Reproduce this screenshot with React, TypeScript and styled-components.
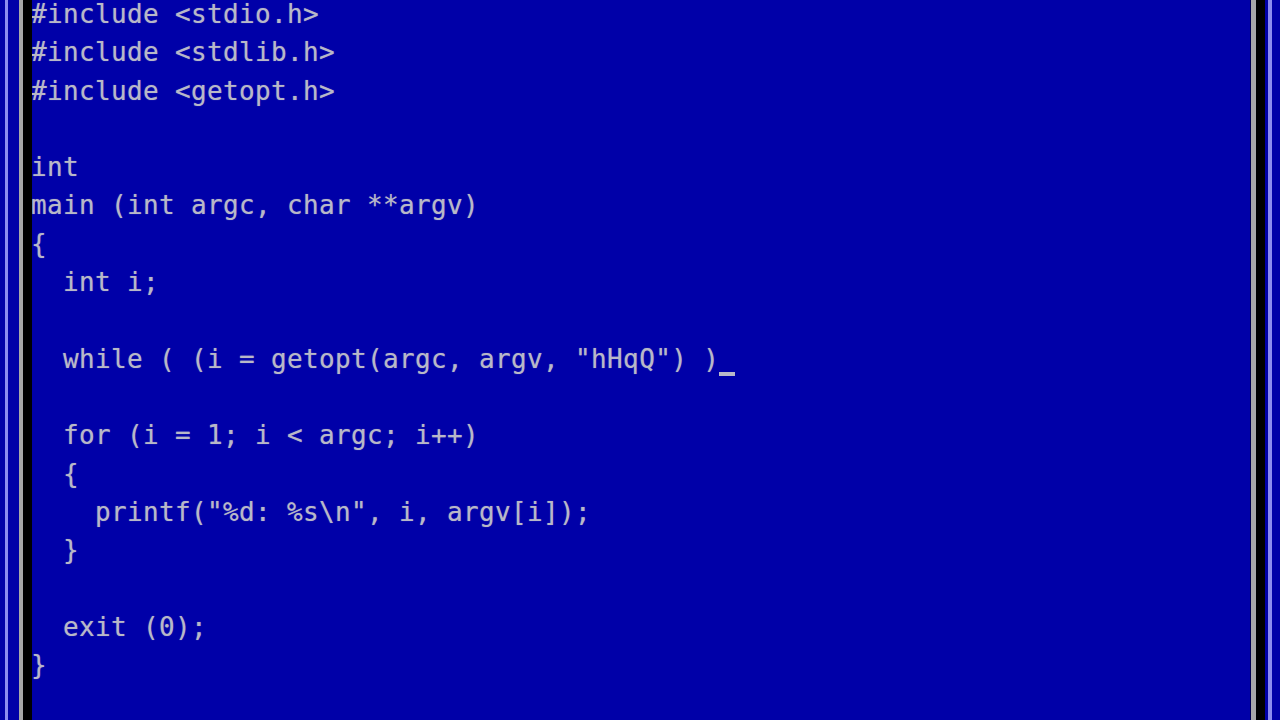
import React from "react";
import styled, { createGlobalStyle } from "styled-components";

const Global = createGlobalStyle`
  html, body { margin: 0; padding: 0; background: #0000a8; overflow: hidden; }
  #root { width: 1280px; height: 720px; }
`;

const Screen = styled.div`
  display: flex;
  width: 1280px;
  height: 720px;
  background: #0000a8;
  overflow: hidden;
`;

const Frame = styled.div`
  display: flex;
  flex: none;
  height: 100%;
`;

const Stripe = styled.div<{ $w: number; $c: string }>`
  flex: none;
  width: ${(p) => p.$w}px;
  height: 100%;
  background: ${(p) => p.$c};
`;

const Editor = styled.div`
  flex: 1;
  min-width: 0;
  overflow: hidden;
  padding-left: 0;
`;

const Code = styled.div`
  margin-top: -5px;
  margin-left: -1px;
  font-family: "DejaVu Sans Mono", "Liberation Mono", monospace;
  font-size: 26px;
  letter-spacing: 0.35px;
  line-height: 38.3px;
  color: #b8b8c8;
  white-space: pre;
  text-shadow: 0 0 1px rgba(184, 184, 200, 0.6);
`;

const Line = styled.div`
  height: 38.3px;
`;

const Cursor = styled.span`
  display: inline-block;
  width: 16px;
  height: 4px;
  background: #b8b8c8;
  vertical-align: -8px;
`;

const BLUE = "#0000a8";
const LAV = "#8c8cf0";
const GRAY = "#a8a8a8";
const BLACK = "#000000";

const lines: string[] = [
  "#include <stdio.h>",
  "#include <stdlib.h>",
  "#include <getopt.h>",
  "",
  "int",
  "main (int argc, char **argv)",
  "{",
  "  int i;",
  "",
  "  while ( (i = getopt(argc, argv, \"hHqQ\") )",
  "",
  "  for (i = 1; i < argc; i++)",
  "  {",
  "    printf(\"%d: %s\\n\", i, argv[i]);",
  "  }",
  "",
  "  exit (0);",
  "}",
  "",
];

export default function App() {
  return (
    <>
      <Global />
      <Screen>
        <Frame>
          <Stripe $w={5} $c={BLUE} />
          <Stripe $w={3} $c={LAV} />
          <Stripe $w={11} $c={BLUE} />
          <Stripe $w={4} $c={GRAY} />
          <Stripe $w={9} $c={BLACK} />
        </Frame>
        <Editor>
          <Code>
            {lines.map((l, i) => (
              <Line key={i}>
                {l}
                {i === 9 && <Cursor />}
              </Line>
            ))}
          </Code>
        </Editor>
        <Frame>
          <Stripe $w={1} $c="#000050" />
          <Stripe $w={5} $c={GRAY} />
          <Stripe $w={9} $c={BLACK} />
          <Stripe $w={3} $c={BLUE} />
          <Stripe $w={4} $c={LAV} />
          <Stripe $w={8} $c={BLUE} />
        </Frame>
      </Screen>
    </>
  );
}
